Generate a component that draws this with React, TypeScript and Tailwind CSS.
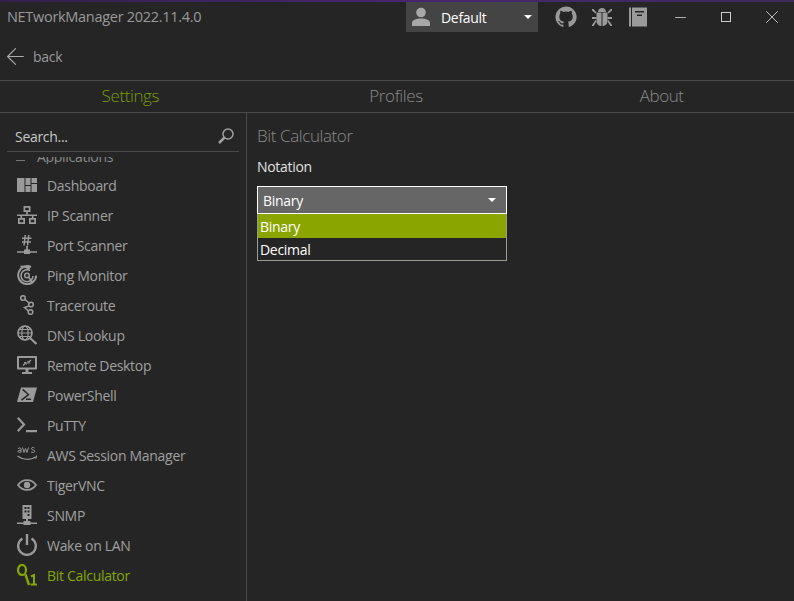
import type { ReactNode } from "react";
import { ArrowLeft, Minus, X } from "lucide-react";

const G = "#9a9a9a";

const NavIcon = ({ children, color = G }: { children: ReactNode; color?: string }) => (
  <svg viewBox="0 0 20 20" width="20" height="20" fill={color} stroke="none">
    {children}
  </svg>
);

const items: { name: string; icon: ReactNode }[] = [
  {
    name: "Dashboard",
    icon: (
      <NavIcon>
        <path d="M0 3h7.500v14H0zM8.500 3h5v7h-5zM14.500 3H20v5h-5.500zM8.500 11h5v6h-5zM14.500 9H20v8h-5.500z" />
      </NavIcon>
    ),
  },
  {
    name: "IP Scanner",
    icon: (
      <NavIcon>
        <path d="M6.500 1h7v6h-7zm1.700 1.700v2.600h3.600V2.700z" fillRule="evenodd" />
        <path d="M1 13h7v6H1zm1.700 1.700v2.600h3.600v-2.600zM12 13h7v6h-7zm1.700 1.700v2.600h3.600v-2.600z" fillRule="evenodd" />
        <path d="M9.200 7h1.600v2.500H20v1.600h-3.500V13h-1.600v-1.900H5.100V13H3.500v-1.900H0V9.500h9.200z" />
      </NavIcon>
    ),
  },
  {
    name: "Port Scanner",
    icon: (
      <NavIcon>
        <path d="M7.500 0h1.500l-.3 2.500h2L11 0h1.500l-.3 2.500H14.500V4h-2.500l-.2 2.300h2.200v1.500h-2.400l-.3 2.700h-1.500l.3-2.700h-2l-.3 2.700H6.300l.3-2.700H5V6.300h1.800L7 4H5V2.500h2.200zM8.500 4l-.2 2.300h2L10.500 4z" fillRule="evenodd" />
        <path d="M9.100 11h1.800v3.500H13v1.700h7v1.600h-7V19H7v-1.200H0v-1.600h7v-1.700h2.100z" />
      </NavIcon>
    ),
  },
  {
    name: "Ping Monitor",
    icon: (
      <svg viewBox="0 0 20 20" width="20" height="20" fill="none" stroke={G} strokeWidth="2">
        <path d="M14 2A9 9 0 1 0 19.200 10.500M3.500 1.500c3.500 0 6.500.500 9 2.500" />
        <path d="M13 5.500A6 6 0 1 0 16 11" strokeWidth="1.600" />
        <circle cx="10" cy="10.500" r="2.300" strokeWidth="1.500" />
        <path d="M11 11.500l4 5" strokeWidth="1.500" />
        <circle cx="14.500" cy="17" r="1.500" fill={G} stroke="none" />
      </svg>
    ),
  },
  {
    name: "Traceroute",
    icon: (
      <svg viewBox="0 0 20 20" width="20" height="20" fill="none" stroke={G} strokeWidth="1.600">
        <circle cx="6" cy="3" r="2.300" />
        <circle cx="14" cy="9.500" r="2.300" />
        <circle cx="13.500" cy="17" r="2.300" />
        <path d="M8 4.500l4 3.500M12 11l-4.500 1.500L11.500 16" />
      </svg>
    ),
  },
  {
    name: "DNS Lookup",
    icon: (
      <svg viewBox="0 0 20 20" width="20" height="20" fill="none" stroke={G} strokeWidth="1.200">
        <circle cx="8" cy="8" r="7" strokeWidth="1.700" />
        <ellipse cx="8" cy="8" rx="3.200" ry="7" />
        <path d="M1 8h14M2 4.500h12M2 11.500h12" />
        <path d="M13 13l6.500 6" strokeWidth="2.200" />
      </svg>
    ),
  },
  {
    name: "Remote Desktop",
    icon: (
      <NavIcon>
        <path d="M1 1h18a1 1 0 0 1 1 1v11.500a1 1 0 0 1-1 1h-7.500V17H15v2H5v-2h3.500v-2.500H1a1 1 0 0 1-1-1V2a1 1 0 0 1 1-1zm1 2v9.500h16V3z" fillRule="evenodd" />
        <path d="M13.500 4.500l.900.900-2 2 1 1h-3v-3l1 1zM6.500 11l-.900-.900 2-2-1-1h3v3l-1-1z" />
      </NavIcon>
    ),
  },
  {
    name: "PowerShell",
    icon: (
      <NavIcon>
        <path d="M4 2.500h16L16 17H0zM5 5l5.500 4.500L4 14.500l1 1.200 7.500-6L6.500 4zM9 13.500V15h5v-1.500z" fillRule="evenodd" />
      </NavIcon>
    ),
  },
  {
    name: "PuTTY",
    icon: (
      <NavIcon>
        <path d="M0 3.500l1.500-1.500L8.500 9.500 1.500 17 0 15.500l5.500-6zM9 15h11v2.200H9z" />
      </NavIcon>
    ),
  },
  {
    name: "AWS Session Manager",
    icon: (
      <svg viewBox="0 0 20 20" width="20" height="20" fill="none" stroke={G} strokeWidth="1">
        <path d="M1 3.500c2-1 3-.500 3 .500v3.500M4 5.500c-2-.500-3 0-3 1s2 1.200 3 0M5.500 2.500l1.500 5 1.500-4 1.500 4 1.500-5M17.500 3c-1.500-1-3.500-.500-3 1 .300 1 3.300.800 3.300 2.200 0 1.500-2.300 1.500-3.800.800" />
        <path d="M0.500 11c5 4 13 4.500 18 1M19.500 10.500l-.500 2.500-2.300-.500" strokeWidth="1.100" />
      </svg>
    ),
  },
  {
    name: "TigerVNC",
    icon: (
      <svg viewBox="0 0 20 20" width="20" height="20" fill="none" stroke={G} strokeWidth="1.800">
        <path d="M1 10c4.500-6.500 13.500-6.500 18 0-4.500 6.500-13.500 6.500-18 0z" />
        <circle cx="10" cy="10" r="3.200" fill={G} stroke="none" />
      </svg>
    ),
  },
  {
    name: "SNMP",
    icon: (
      <NavIcon>
        <path d="M5.500 0h9v14h-9zM7.500 2v2h2V2zm3 0v2h2V2zm-3 3.500v2h2v-2zm3 0v2h2v-2zm0 3.500v2h2V9z" fillRule="evenodd" />
        <path d="M9 14h2v2h2.500v1.500H20V19h-6.500v1h-7v-1H0v-1.500h6.500V16H9z" />
      </NavIcon>
    ),
  },
  {
    name: "Wake on LAN",
    icon: (
      <svg viewBox="0 0 20 22" width="20" height="22" fill="none" stroke={G} strokeWidth="2.400">
        <path d="M5.500 4.500a8.800 8.800 0 1 0 9 0M10 0v11" />
      </svg>
    ),
  },
];

export default function App() {
  return (
    <div className="flex h-[601px] w-[794px] flex-col overflow-hidden bg-[#252525] font-['Open_Sans',sans-serif] text-[14px] tracking-[-0.3px] text-[#a0a0a0]">
      {/* strip of the desktop above the window */}
      <div className="h-[2px] bg-gradient-to-r from-[#33204a] via-[#4a2370] to-[#3f2a5c]" />

      {/* title bar */}
      <div className="flex h-[30px] items-center pr-[11px]">
        <span className="flex-1 pl-[7px] text-[14.5px] text-[#999999]">NETworkManager 2022.11.4.0</span>
        <div className="flex h-[30px] w-[132px] items-center bg-[#444444] pl-[5px]">
          <svg viewBox="0 0 20 20" width="20" height="20" fill="#a8a8a8">
            <circle cx="10" cy="5.500" r="4.800" />
            <path d="M1 19v-3c0-3 4-4.500 9-4.500s9 1.500 9 4.500v3z" />
          </svg>
          <span className="ml-[10px] text-white">Default</span>
          <span className="ml-auto mr-[6px] h-0 w-0 border-x-[4px] border-t-[4px] border-x-transparent border-t-white" />
        </div>
        <svg className="ml-[17px]" viewBox="0 0 24 24" width="22" height="22" fill="#9a9a9a">
          <path d="M12 .5a11.500 11.500 0 0 0-3.640 22.410c.58.110.790-.250.790-.560v-2.140c-3.200.700-3.880-1.360-3.880-1.360-.520-1.330-1.280-1.690-1.280-1.690-1.050-.710.080-.700.080-.700 1.160.080 1.770 1.190 1.770 1.190 1.030 1.760 2.700 1.250 3.360.960.100-.750.400-1.250.730-1.540-2.550-.290-5.240-1.280-5.240-5.680 0-1.250.450-2.280 1.180-3.080-.120-.290-.510-1.460.110-3.040 0 0 .960-.310 3.160 1.170a11 11 0 0 1 5.760 0c2.200-1.480 3.160-1.170 3.160-1.170.620 1.580.230 2.750.110 3.040.730.800 1.180 1.830 1.180 3.080 0 4.410-2.690 5.380-5.260 5.670.410.360.780 1.060.780 2.140v3.170c0 .310.210.670.800.560A11.500 11.500 0 0 0 12 .5z" />
        </svg>
        <svg className="ml-[15px]" viewBox="0 0 20 20" width="20" height="20" fill="#9a9a9a">
          <path d="M6 5C6 2.500 8 1 10 1s4 1.500 4 4z" />
          <path d="M4.500 5.500h5V19C7 19 4.500 17 4.500 14zM10.500 5.500h5V14c0 3-2.500 5-5 5z" />
          <path d="M0 2h1.500l3 3.500-1 1L0 3.500zM20 2h-1.500l-3 3.500 1 1L20 3.500zM0 10h4.500v2H0zM15.500 10H20v2h-4.500zM0 18l3.500-5 1.200 1-3 5H0zM20 18l-3.500-5-1.200 1 3 5H20z" />
        </svg>
        <svg className="ml-[17px]" viewBox="0 0 18 20" width="18" height="20" fill="#9a9a9a">
          <path d="M0 .5h2V19.500H0zM3 .5h15v19H3zM6 4v1.500h9V4zM8 7.500V9h5V7.500z" fillRule="evenodd" />
        </svg>
        <Minus className="ml-[25px]" size={17} strokeWidth={1.200} color="#cccccc" />
        <div className="ml-[32px] h-[10px] w-[10px] border border-[#cccccc]" />
        <X className="ml-[30px]" size={22} strokeWidth={1} color="#cccccc" />
      </div>

      {/* back */}
      <div className="flex h-[48px] items-center pl-[2px]">
        <ArrowLeft size={27} strokeWidth={1} color="#aaaaaa" />
        <span className="ml-[4px] text-[#999999]">back</span>
      </div>

      {/* tabs */}
      <div className="grid h-[33px] grid-cols-3 items-center border-y border-[#4a4a4a] pb-[2px] text-center text-[17px] font-light tracking-[-0.4px]">
        <span className="pr-[4px] text-[#779f00]">Settings</span>
        <span className="pr-[2px] text-[#8a8a8a]">Profiles</span>
        <span className="text-[#8a8a8a]">About</span>
      </div>

      <div className="flex min-h-0 flex-1">
        {/* sidebar */}
        <aside className="flex w-[247px] shrink-0 flex-col border-r border-[#4a4a4a]">
          <div className="mx-[7px] mt-[8px] flex h-[31px] items-center justify-between border-b border-[#4a4a4a] pl-[8px] pr-[5px] text-[#c8c8c8]">
            <span>Search...</span>
            <svg viewBox="0 0 16 16" width="16" height="16" fill="none" stroke="#a0a0a0">
              <circle cx="10" cy="6" r="5" strokeWidth="1.500" />
              <path d="M6.500 9.500L1 15" strokeWidth="2.500" />
            </svg>
          </div>
          {/* list is scrolled: only the bottom of the group header shows */}
          <div className="relative mb-[6px] mt-[5px] h-[7px] shrink-0 overflow-hidden">
            <span className="absolute -top-[11px] left-[37px] text-[#8a8a8a]">Applications</span>
            <span className="absolute left-[16px] top-[3px] h-px w-[9px] bg-[#777777]" />
          </div>
          <div className="flex flex-col pl-[17px]">
            {items.map((it) => (
              <div key={it.name} className="flex h-[30px] items-center gap-[10px]">
                <span className="flex w-[20px] items-center justify-center">{it.icon}</span>
                <span>{it.name}</span>
              </div>
            ))}
            <div className="flex h-[30px] items-center gap-[10px] text-[#84a800]">
              <svg viewBox="0 0 20 22" width="20" height="22" fill="none" stroke="#84a800">
                <ellipse cx="5" cy="6" rx="4" ry="5" strokeWidth="2.200" />
                <path d="M8.500 10.500L12 21" strokeWidth="2.400" />
                <path d="M14 12.500l3-1.500v9.500M13.500 20.500h6.500" strokeWidth="2" />
              </svg>
              <span>Bit Calculator</span>
            </div>
          </div>
        </aside>

        {/* content */}
        <main className="flex-1 pl-[10px]">
          <h1 className="mt-[11px] text-[17px] leading-[24px] font-light tracking-[-0.4px] text-[#8a8a8a]">Bit Calculator</h1>
          <div className="mt-[9px] leading-[20px] font-medium text-[#e0e0e0]">Notation</div>
          <div className="relative mt-[9px] w-[250px]">
            <div className="flex h-[28px] items-center justify-between border border-white bg-[#666666] pl-[5px] pr-[10px] text-white">
              <span>Binary</span>
              <span className="h-0 w-0 border-x-[4px] border-t-[4px] border-x-transparent border-t-white" />
            </div>
            <div className="absolute left-0 top-[28px] w-full border border-t-0 border-[#9a9a8e] bg-[#252525] text-white">
              <div className="flex h-[24px] items-center bg-[#8aa500] pl-[2px]">Binary</div>
              <div className="flex h-[22px] items-center pl-[2px]">Decimal</div>
            </div>
          </div>
        </main>
      </div>
    </div>
  );
}
